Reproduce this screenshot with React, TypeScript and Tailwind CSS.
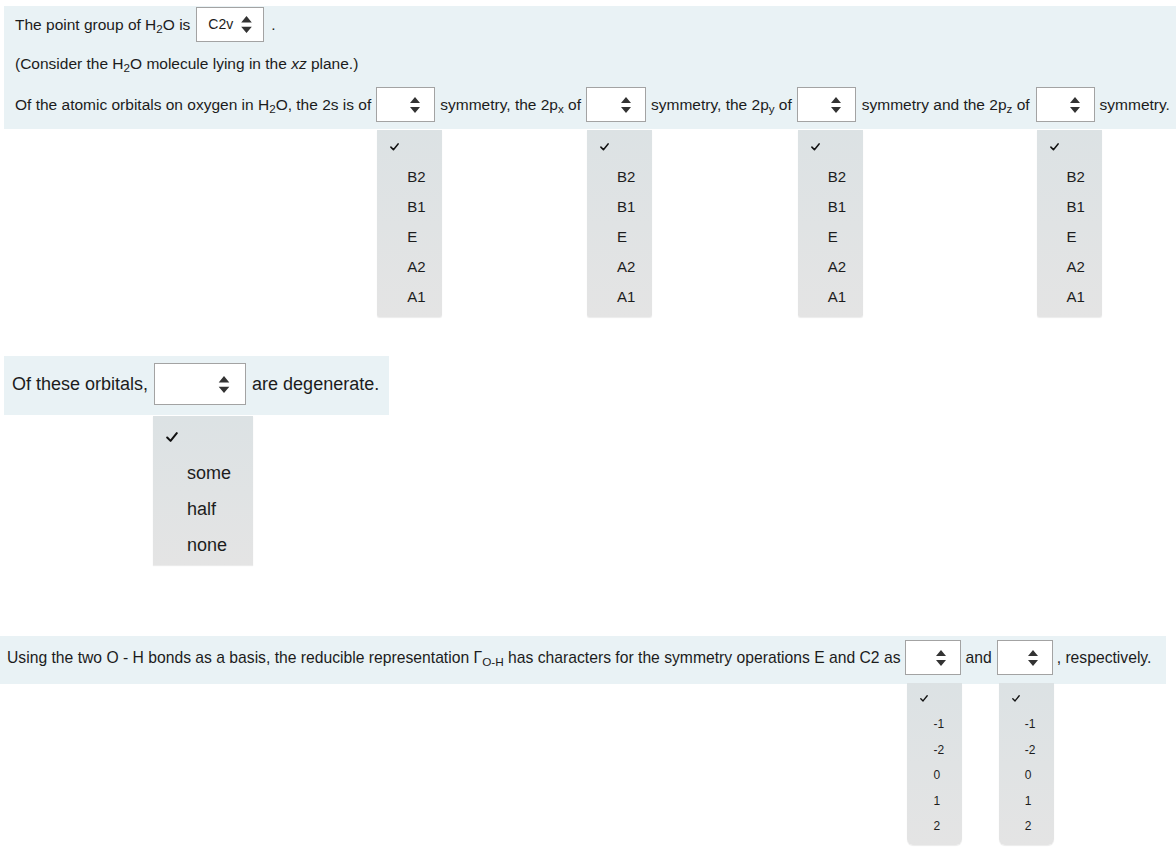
import React from 'react';

const font = { fontFamily: '"Liberation Sans", Arial, Helvetica, sans-serif' };

const Arrows = ({ w = 10, h = 16 }: { w?: number; h?: number }) => (
  <svg width={w} height={h} viewBox="0 0 10 16" className="shrink-0">
    <path d="M5 0 L10 6 H0 Z M0 10 H10 L5 16 Z" fill="#333" />
  </svg>
);

const Check = ({ size = 9 }: { size?: number }) => (
  <svg width={size} height={size * 0.85} viewBox="0 0 10 8.5" className="shrink-0">
    <path d="M1 4.6 L3.8 7.4 L9 1" fill="none" stroke="#111" strokeWidth="1.7" strokeLinecap="round" strokeLinejoin="round" />
  </svg>
);

type MenuCfg = {
  items: string[];
  left: string;
  top: string;
  width: string;
  itemH: string;
  text: string;
  pad: string;
  checkPl: string;
  textPl: string;
  check: number;
  rounded?: string;
};

const Menu = ({ m }: { m: MenuCfg }) => (
  <div className={`absolute z-10 bg-linear-to-b from-[#dce2e4] to-[#e4e4e4] shadow-[0_1px_1px_rgba(0,0,0,0.08)] ${m.left} ${m.top} ${m.width} ${m.pad} ${m.rounded ?? ''}`}>
    <div className={`flex items-center ${m.itemH} ${m.checkPl}`}>
      <Check size={m.check} />
    </div>
    {m.items.map(it => (
      <div key={it} className={`flex items-center ${m.itemH} ${m.textPl} ${m.text} text-[#1d1d1d]`}>{it}</div>
    ))}
  </div>
);

const Sel = ({ box, arrow, value, valueCls, menu }: { box: string; arrow: [number, number]; value?: string; valueCls?: string; menu?: MenuCfg }) => (
  <span className="relative inline-flex shrink-0">
    <span className={`inline-flex items-center bg-white border border-[#a3a3a3] ${box}`}>
      {value && <span className={valueCls}>{value}</span>}
      <span className="flex-1" />
      <Arrows w={arrow[0]} h={arrow[1]} />
    </span>
    {menu && <Menu m={menu} />}
  </span>
);

const symMenu: MenuCfg = {
  items: ['B2', 'B1', 'E', 'A2', 'A1'],
  left: 'left-[1px]',
  top: 'top-[43px]',
  width: 'w-[65px]',
  itemH: 'h-[30px]',
  text: 'text-[15px]',
  pad: 'pt-[2px] pb-[5px]',
  checkPl: 'pl-[13px]',
  textPl: 'pl-[30px]',
  check: 9,
  rounded: 'rounded-b-[2px]',
};

const charMenu: MenuCfg = {
  items: ['-1', '-2', '0', '1', '2'],
  left: 'left-[2px]',
  top: 'top-[43px]',
  width: 'w-[55px]',
  itemH: 'h-[25.5px]',
  text: 'text-[12px]',
  pad: 'pt-[3px] pb-[6px]',
  checkPl: 'pl-[13px]',
  textPl: 'pl-[26px]',
  check: 8,
  rounded: 'rounded-b-[6px]',
};

const degMenu: MenuCfg = {
  items: ['some', 'half', 'none'],
  left: 'left-[-1px]',
  top: 'top-[53px]',
  width: 'w-[100px]',
  itemH: 'h-[36px]',
  text: 'text-[18px]',
  pad: 'pt-[3px] pb-[2px]',
  checkPl: 'pl-[13px]',
  textPl: 'pl-[34px]',
  check: 12,
};

export default function App() {
  return (
    <div className="min-h-[866px] w-[1176px] bg-white text-[#1c1c1c] overflow-hidden" style={font}>
      {/* section 1 */}
      <div className="ml-[4px] mt-[6px] bg-[#e9f2f5] pl-[11px] pt-[1px] pb-[7px] text-[15.5px]">
        <div className="flex items-center h-[35px]">
          <span>The point group of H<sub>2</sub>O is</span>
          <span className="ml-[6px]">
            <Sel box="w-[68px] h-[35px] pl-[11px] pr-[10px]" arrow={[13, 17]} value="C2v" valueCls="text-[14px]" />
          </span>
          <span className="ml-[7px]">.</span>
        </div>
        <div className="mt-[12px] h-[20px] flex items-center">
          <span>(Consider the H<sub>2</sub>O molecule lying in the <i>xz</i> plane.)</span>
        </div>
        <div className="mt-[13px] flex items-center h-[35px] whitespace-nowrap">
          <span>Of the atomic orbitals on oxygen in H<sub>2</sub>O, the 2s is of</span>
          <span className="ml-[5px]"><Sel box="w-[59px] h-[35px] pr-[14px]" arrow={[10, 16]} menu={symMenu} /></span>
          <span className="ml-[5px]">symmetry, the 2p<sub>x</sub> of</span>
          <span className="ml-[5px]"><Sel box="w-[60px] h-[35px] pr-[14px]" arrow={[10, 16]} menu={symMenu} /></span>
          <span className="ml-[5px]">symmetry, the 2p<sub>y</sub> of</span>
          <span className="ml-[5px]"><Sel box="w-[59px] h-[35px] pr-[14px]" arrow={[10, 16]} menu={symMenu} /></span>
          <span className="ml-[6px]">symmetry and the 2p<sub>z</sub> of</span>
          <span className="ml-[6px]"><Sel box="w-[59px] h-[35px] pr-[14px]" arrow={[10, 16]} menu={symMenu} /></span>
          <span className="ml-[5px]">symmetry.</span>
        </div>
      </div>

      {/* section 2 */}
      <div className="ml-[4px] mt-[227px] inline-flex items-center bg-[#e9f2f5] pl-[8px] pr-[10px] pt-[7px] pb-[10px] text-[18px]">
        <span>Of these orbitals,</span>
        <span className="ml-[6px]"><Sel box="w-[92px] h-[42px] pr-[14px]" arrow={[14, 17]} menu={degMenu} /></span>
        <span className="ml-[6px]">are degenerate.</span>
      </div>

      {/* section 3 */}
      <div className="mt-[221px] w-[1166px] flex items-center bg-[#e9f2f5] pl-[7px] pt-[4px] pb-[9px] text-[15.7px] whitespace-nowrap">
        <span>Using the two O - H bonds as a basis, the reducible representation Γ<sub>O-H</sub> has characters for the symmetry operations E and C2 as</span>
        <span className="ml-[5px]"><Sel box="w-[56px] h-[35px] pr-[14px]" arrow={[10, 16]} menu={charMenu} /></span>
        <span className="ml-[4px]">and</span>
        <span className="ml-[5px]"><Sel box="w-[56px] h-[35px] pr-[14px]" arrow={[10, 16]} menu={charMenu} /></span>
        <span className="ml-[4px]">, respectively.</span>
      </div>
    </div>
  );
}
